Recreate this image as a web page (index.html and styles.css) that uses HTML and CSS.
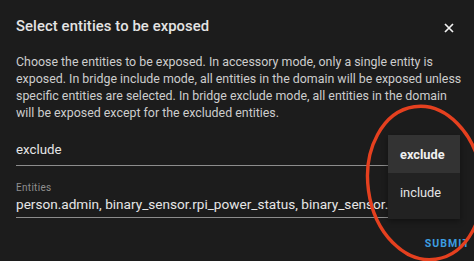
FILE: index.html
```html
<!DOCTYPE html>
<html>
<head>
<meta charset="utf-8">
<link rel="stylesheet" href="styles.css">
</head>
<body>
<div class="dialog">
  <header class="head">
    <h2 class="title">Select entities to be exposed</h2>
    <button class="close" aria-label="Close">
      <svg width="10" height="10" viewBox="0 0 10 10"><path d="M1 1L9 9M9 1L1 9" stroke="#f2f2f2" stroke-width="1.7" fill="none"/></svg>
    </button>
  </header>
  <p class="desc">Choose the entities to be exposed. In accessory mode, only a single entity is exposed. In bridge include mode, all entities in the domain will be exposed unless specific entities are selected. In bridge exclude mode, all entities in the domain will be exposed except for the excluded entities.</p>
  <div class="field field-select">
    <span class="value">exclude</span>
  </div>
  <div class="field field-entities">
    <span class="label">Entities</span>
    <span class="value">person.admin, binary_sensor.rpi_power_status, binary_sensor.rpi_cpu_temperature</span>
  </div>
  <div class="actions">
    <button class="submit">SUBMIT</button>
  </div>
  <ul class="menu">
    <li class="item active">exclude</li>
    <li class="item">include</li>
  </ul>
  <svg class="annot" width="130" height="180" viewBox="0 0 130 180">
    <ellipse cx="65" cy="87" rx="57" ry="77" transform="rotate(-8 65 87)" fill="none" stroke="#e5401f" stroke-width="3.4"/>
  </svg>
</div>
</body>
</html>
```

FILE: styles.css
```css
html, body {
  margin: 0;
  padding: 0;
  background: #1c1c1c;
  width: 474px;
  height: 261px;
  overflow: hidden;
}
.dialog {
  position: relative;
  width: 474px;
  height: 261px;
  box-sizing: border-box;
  padding: 0 16px;
  font-family: Roboto, "Liberation Sans", sans-serif;
  color: #e1e1e1;
  overflow: hidden;
}
.head {
  display: flex;
  align-items: center;
  justify-content: space-between;
  height: 52px;
}
.title {
  margin: 0;
  font-size: 14.8px;
  font-weight: 500;
  color: #e4e4e4;
  letter-spacing: 0.1px;
}
.close {
  background: none;
  border: 0;
  padding: 0;
  margin-right: 4px;
  margin-top: 3px;
  width: 10px;
  height: 10px;
  display: flex;
}
.desc {
  margin: 1px -8px 0 0;
  font-size: 12.4px;
  line-height: 17px;
  color: #cdcdcd;
  letter-spacing: 0;
}
.field {
  display: flex;
  flex-direction: column;
  border-bottom: 1px solid #8c8c8c;
}
.field-select {
  margin-top: 8px;
  height: 36px;
  justify-content: center;
}
.field-select .value {
  font-size: 13.3px;
  color: #e6e6e6;
  padding-top: 4px;
}
.field-entities {
  margin-top: 15px;
  height: 36px;
  justify-content: flex-end;
}
.label {
  font-size: 10px;
  color: #8f8f8f;
  letter-spacing: 0.3px;
  line-height: 12px;
}
.field-entities .value {
  font-size: 13.6px;
  color: #e6e6e6;
  white-space: nowrap;
  overflow: hidden;
  line-height: 18px;
  padding: 1px 0 4px;
}
.actions {
  display: flex;
  justify-content: flex-end;
  margin-top: 19px;
}
.submit {
  background: none;
  border: 0;
  padding: 0;
  margin-right: -12px;
  font-family: Roboto, "Liberation Sans", sans-serif;
  font-size: 10.5px;
  font-weight: 700;
  letter-spacing: 1.1px;
  color: #3c9ee0;
}
.menu {
  position: absolute;
  left: 388px;
  top: 135px;
  width: 72px;
  margin: 0;
  padding: 0 0 8px 0;
  list-style: none;
  background: #222222;
  box-shadow: 0 2px 6px rgba(0,0,0,0.4);
}
.item {
  height: 38px;
  display: flex;
  align-items: center;
  padding-left: 12px;
  font-size: 12.8px;
  color: #e4e4e4;
}
.item.active {
  background: #333333;
  font-weight: 700;
  color: #f0f0f0;
}
.annot {
  position: absolute;
  left: 360px;
  top: 96px;
  pointer-events: none;
}
```
